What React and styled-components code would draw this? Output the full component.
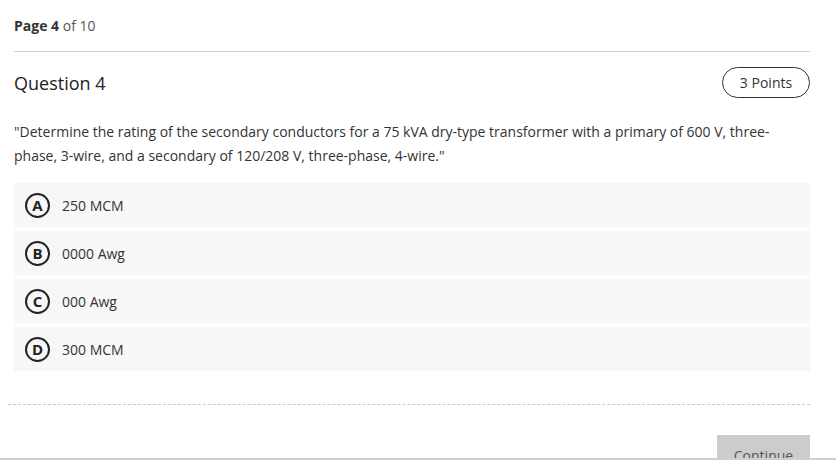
import React from "react";
import styled, { createGlobalStyle } from "styled-components";

const Global = createGlobalStyle`
  html, body {
    margin: 0;
    padding: 0;
    background: #fff;
    overflow: hidden;
  }
  body {
    font-family: "Open Sans", "Liberation Sans", sans-serif;
    color: #333;
  }
`;

const Page = styled.div`
  width: 796px;
  padding: 16px 26px 0 14px;
`;

const PageHeader = styled.div`
  font-size: 14px;
  line-height: 20px;
  color: #555;
  padding-bottom: 15px;
  border-bottom: 1px solid #cfcfcf;

  b {
    color: #333;
    font-weight: 700;
  }
`;

const QuestionHead = styled.div`
  display: flex;
  align-items: center;
  justify-content: space-between;
  margin-top: 15px;
`;

const Title = styled.h2`
  margin: 0;
  font-size: 18px;
  font-weight: 400;
  color: #222;
`;

const Pill = styled.span`
  display: inline-flex;
  align-items: center;
  justify-content: center;
  width: 86px;
  height: 29px;
  border: 1px solid #333;
  border-radius: 16px;
  font-size: 14px;
  color: #333;
`;

const Prompt = styled.p`
  margin: 22px 0 15px;
  font-size: 14px;
  line-height: 24px;
  color: #333;
`;

const Options = styled.div`
  display: flex;
  flex-direction: column;
  gap: 4px;
`;

const Option = styled.label`
  display: flex;
  align-items: center;
  gap: 12px;
  height: 44px;
  padding: 0 12px;
  background: #f7f7f7;
  cursor: pointer;
`;

const Letter = styled.span`
  display: inline-flex;
  align-items: center;
  justify-content: center;
  width: 21px;
  height: 21px;
  border: 2px solid #222;
  border-radius: 50%;
  font-size: 15px;
  font-weight: 700;
  line-height: 1;
  color: #222;
  box-sizing: content-box;
  margin-left: -1px;
`;

const OptionText = styled.span`
  font-size: 14px;
  color: #333;
`;

const Divider = styled.hr`
  margin: 33px 0 0 -6px;
  border: 0;
  border-top: 1px dashed #c8c8c8;
`;

const Actions = styled.div`
  display: flex;
  justify-content: flex-end;
  margin-top: 30px;
`;

const Continue = styled.button`
  width: 93px;
  height: 36px;
  border: 0;
  background: #cccccc;
  color: #555;
  font-family: inherit;
  font-size: 14px;
  padding-top: 6px;
`;

const FooterRule = styled.div`
  position: fixed;
  left: 0;
  right: 0;
  bottom: 0;
  height: 2px;
  background: #cfcfcf;
`;

const options = [
  ["A", "250 MCM"],
  ["B", "0000 Awg"],
  ["C", "000 Awg"],
  ["D", "300 MCM"],
];

export default function App() {
  return (
    <>
      <Global />
      <Page>
        <PageHeader>
          <b>Page 4</b> of 10
        </PageHeader>
        <QuestionHead>
          <Title>Question 4</Title>
          <Pill>3 Points</Pill>
        </QuestionHead>
        <Prompt>
          "Determine the rating of the secondary conductors for a 75 kVA dry-type
          transformer with a primary of 600 V, three-phase, 3-wire, and a
          secondary of 120/208 V, three-phase, 4-wire."
        </Prompt>
        <Options>
          {options.map(([key, text]) => (
            <Option key={key}>
              <Letter>{key}</Letter>
              <OptionText>{text}</OptionText>
            </Option>
          ))}
        </Options>
        <Divider />
        <Actions>
          <Continue>Continue</Continue>
        </Actions>
      </Page>
      <FooterRule />
    </>
  );
}
